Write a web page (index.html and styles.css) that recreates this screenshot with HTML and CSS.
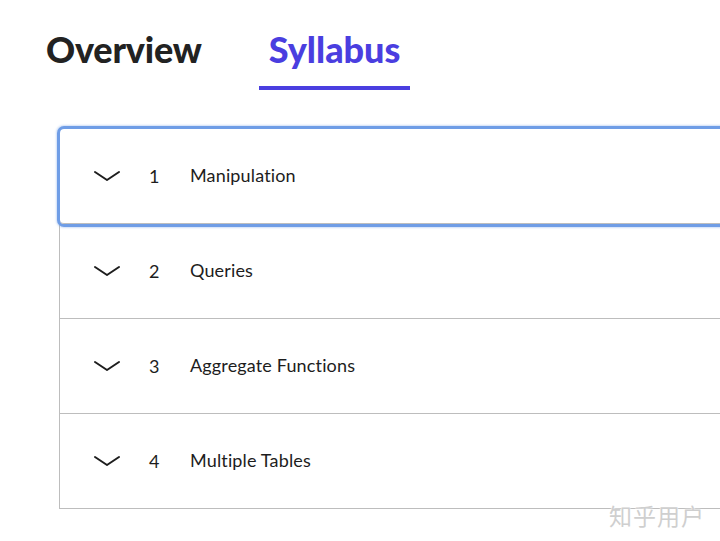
FILE: index.html
```html
<!DOCTYPE html>
<html>
<head>
<meta charset="utf-8">
<link rel="stylesheet" href="styles.css">
</head>
<body>
<div class="page">
  <nav class="tabs">
    <div class="tab">Overview</div>
    <div class="tab active">Syllabus</div>
  </nav>
  <div class="list">
    <div class="row focused">
      <svg class="chev" width="26" height="12" viewBox="0 0 26 12"><polyline points="1,2 13,10 25,2" fill="none" stroke="#1d1d1d" stroke-width="2" stroke-linecap="round" stroke-linejoin="round"/></svg>
      <span class="num">1</span>
      <span class="title">Manipulation</span>
    </div>
    <div class="row">
      <svg class="chev" width="26" height="12" viewBox="0 0 26 12"><polyline points="1,2 13,10 25,2" fill="none" stroke="#1d1d1d" stroke-width="2" stroke-linecap="round" stroke-linejoin="round"/></svg>
      <span class="num">2</span>
      <span class="title">Queries</span>
    </div>
    <div class="row">
      <svg class="chev" width="26" height="12" viewBox="0 0 26 12"><polyline points="1,2 13,10 25,2" fill="none" stroke="#1d1d1d" stroke-width="2" stroke-linecap="round" stroke-linejoin="round"/></svg>
      <span class="num">3</span>
      <span class="title">Aggregate Functions</span>
    </div>
    <div class="row">
      <svg class="chev" width="26" height="12" viewBox="0 0 26 12"><polyline points="1,2 13,10 25,2" fill="none" stroke="#1d1d1d" stroke-width="2" stroke-linecap="round" stroke-linejoin="round"/></svg>
      <span class="num">4</span>
      <span class="title">Multiple Tables</span>
    </div>
  </div>
  <div class="watermark">知乎用户</div>
</div>
</body>
</html>
```
FILE: styles.css
```css
html, body {
  margin: 0;
  padding: 0;
  background: #ffffff;
  overflow: hidden;
}
.page {
  position: relative;
  width: 720px;
  height: 541px;
  overflow: hidden;
  font-family: Lato, "Noto Sans", sans-serif;
}
.tabs {
  display: flex;
  gap: 47px;
  padding: 26px 0 0 36px;
  height: 64px;
}
.tab {
  font-family: Lato, sans-serif;
  font-weight: 900;
  font-size: 36px;
  line-height: 46px;
  color: #222222;
  padding: 0 10px;
  height: 64px;
  box-sizing: border-box;
  letter-spacing: -0.2px;
}
.tab.active {
  color: #4a3ee0;
  border-bottom: 4px solid #4a3ee0;
  letter-spacing: 0;
}
.list {
  margin: 39px 0 0 59px;
  width: 720px;
  border-left: 1px solid #bdbdbd;
}
.row {
  display: flex;
  align-items: center;
  height: 94px;
  border-bottom: 1px solid #bdbdbd;
  padding-left: 34px;
  font-size: 18px;
  color: #1d1d1d;
}
.row.focused {
  border-radius: 4px;
  box-shadow: 0 0 0 3px #6f9de6, 0 0 2px 4px rgba(111, 157, 230, 0.35);
  position: relative;
}
.chev {
  display: block;
  margin-top: 0;
}
.num {
  width: 41px;
  margin-left: 29px;
}
.title {
  letter-spacing: 0.15px;
  margin-top: -2px;
}
.watermark {
  position: absolute;
  right: 15px;
  bottom: 9px;
  font-family: "Noto Sans CJK SC", sans-serif;
  font-size: 23px;
  color: #cfcfcf;
  letter-spacing: 1px;
  text-shadow: 0 0 2px #ffffff, 0 0 1px #ffffff;
}
```
